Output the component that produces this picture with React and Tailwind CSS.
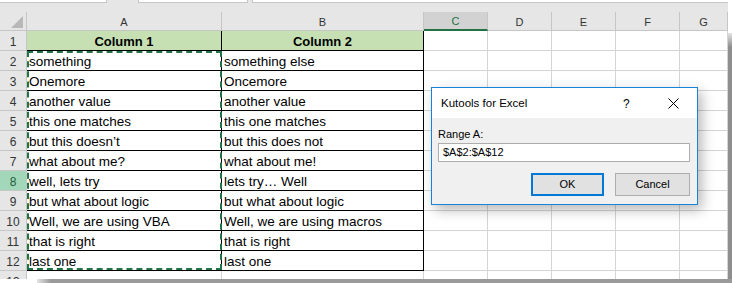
import React from "react";

const colA = [
  "something",
  "Onemore",
  "another value",
  "this one matches",
  "but this doesn’t",
  "what about me?",
  "well, lets try",
  "but what about logic",
  "Well, we are using VBA",
  "that is right",
  "last one"
];

const colB = [
  "something else",
  "Oncemore",
  "another value",
  "this one matches",
  "but this does not",
  "what about me!",
  "lets try… Well",
  "but what about logic",
  "Well, we are using macros",
  "that is right",
  "last one"
];

const letters = ["A", "B", "C", "D", "E", "F", "G"];
const gridCols = "grid grid-cols-[27px_195px_202px_64px_64px_64px_64px_48px]";

const HeaderRow = () => (
  <div className={gridCols}>
    <div className="relative h-[19px] bg-[#e6e6e6] border-r border-b border-[#c6c6c6]">
      <svg width="27" height="19" className="absolute left-0 top-0">
        <polygon points="11,16 23,16 23,4" fill="#b8b8b8" />
      </svg>
    </div>
    {letters.map((l) =>
      l === "C" ? (
        <div key={l} className="h-[19px] bg-[#d2d2d2] border-r border-[#c6c6c6] border-b-2 border-b-[#217346] text-[#217346] text-[11px] leading-[16px] pt-[1px] text-center">
          {l}
        </div>
      ) : (
        <div key={l} className="h-[19px] bg-[#e6e6e6] border-r border-b border-[#c6c6c6] text-[#333] text-[11px] leading-[18px] pt-[1px] text-center">
          {l}
        </div>
      )
    )}
  </div>
);

const DataRow = ({ n }) => {
  const isTitle = n === 1;
  const a = isTitle ? "Column 1" : colA[n - 2];
  const b = isTitle ? "Column 2" : colB[n - 2];
  return (
    <div className={gridCols}>
      <div
        className={`h-[20px] border-r border-b border-[#c6c6c6] text-[12px] leading-[16px] pt-[3px] text-center ${
          n === 8 ? "bg-[#a3d7ba] text-[#1d5e39]" : "bg-[#e6e6e6] text-[#333]"
        }`}
      >
        {n}
      </div>
      {[a, b].map((txt, i) => (
        <div
          key={i}
          className={`h-[20px] border-r border-b border-black whitespace-nowrap overflow-hidden pt-[3px] leading-[16px] ${
            isTitle ? "bg-[#c6e0b4] font-bold text-center text-[13px]" : "bg-white pl-[2px] text-[13.5px]"
          }`}
        >
          {txt}
        </div>
      ))}
      {[0, 1, 2, 3, 4].map((i) => (
        <div key={i} className="h-[20px] border-r border-b border-[#d4d4d4]" />
      ))}
    </div>
  );
};

const LastRow = () => (
  <div className={gridCols}>
    <div className="h-[8px] overflow-hidden bg-[#e6e6e6] border-r border-[#c6c6c6] text-[12px] leading-[16px] pt-[3px] text-center text-[#333]">
      13
    </div>
    {[0, 1, 2, 3, 4, 5, 6].map((i) => (
      <div key={i} className="h-[8px] border-r border-[#d4d4d4]" />
    ))}
  </div>
);

const Dialog = () => (
  <div className="absolute left-[431px] top-[87px] w-[267px] h-[118px] border border-[#1883d7] bg-[#f0f0f0] shadow-[4px_5px_12px_rgba(0,0,0,0.28)] flex flex-col">
    <div className="h-[30px] bg-white flex items-center pl-[9px] text-[11.5px] text-black">
      <span className="flex-1 pt-[2px]">Kutools for Excel</span>
      <span className="w-[10px] text-[12px] pt-[2px]">?</span>
      <svg width="11" height="11" className="ml-[35px] mr-[18px] mt-[1px]">
        <path d="M0.5 0.5 L10.5 10.5 M10.5 0.5 L0.5 10.5" stroke="#000" strokeWidth="1" />
      </svg>
    </div>
    <div className="flex-1 px-[6px] pt-[9px] text-[11px] text-black">
      <div className="leading-[14px]">Range A:</div>
      <div className="mt-[2px] h-[19px] w-[252px] bg-white border border-[#adadad] pl-[4px] leading-[17px]">
        $A$2:$A$12
      </div>
      <div className="mt-[11px] flex justify-end gap-[11px] pr-[1px]">
        <div className="w-[73px] h-[23px] bg-[#e1e1e1] border-2 border-[#0078d7] flex items-center justify-center">
          OK
        </div>
        <div className="w-[75px] h-[23px] bg-[#e1e1e1] border border-[#adadad] flex items-center justify-center">
          Cancel
        </div>
      </div>
    </div>
  </div>
);

const App = () => {
  return (
    <div className="relative w-[732px] h-[283px] bg-white overflow-hidden font-['Liberation_Sans',Arial,sans-serif] text-black">
      <div className="flex">
        <div className="w-[728px] h-[279px] bg-white">
          {/* formula bar edge */}
          <div className="h-[12px] bg-[#e6e6e6] flex items-start">
            <div className="w-[107px] h-[3px] bg-white border-r border-b border-[#c6c6c6]" />
            <div className="ml-[31px] w-[110px] h-[3px] bg-white border-x border-b border-[#c6c6c6]" />
            <div className="ml-[4px] flex-1 h-[3px] bg-white border-l border-b border-[#c6c6c6]" />
          </div>
          <HeaderRow />
          {Array.from({ length: 12 }, (_, i) => (
            <DataRow key={i} n={i + 1} />
          ))}
          <LastRow />
        </div>
        <div className="w-[4px] mt-[33px] h-[246px] bg-[linear-gradient(to_bottom,#e4e4e4,#8e8e8e_14px)]" />
      </div>
      <div className="ml-[37px] h-[4px] bg-[linear-gradient(to_right,#e4e4e4,#9a9a9a_14px)]" />

      {/* copy selection marching ants */}
      <div className="absolute left-[27px] top-[51px] w-[195px] h-[219px] border-2 border-dashed border-[#217346]" />

      <Dialog />
    </div>
  );
};

export default App;
